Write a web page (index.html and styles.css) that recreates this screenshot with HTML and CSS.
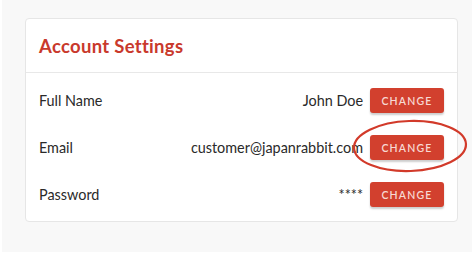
FILE: index.html
```html
<!DOCTYPE html>
<html lang="en">
<head>
    <meta charset="UTF-8">
    <title>Account Settings</title>
    <link rel="stylesheet" href="styles.css">
</head>
<body>
    <div class="page">
        <div class="card">
            <div class="card-header">
                <h2>Account Settings</h2>
            </div>
            <div class="card-body">
                <div class="row">
                    <span class="label">Full Name</span>
                    <span class="value">John Doe</span>
                    <button class="btn">CHANGE</button>
                </div>
                <div class="row">
                    <span class="label">Email</span>
                    <span class="value">customer@japanrabbit.com</span>
                    <button class="btn">CHANGE</button>
                </div>
                <div class="row">
                    <span class="label">Password</span>
                    <span class="value">****</span>
                    <button class="btn">CHANGE</button>
                </div>
            </div>
        </div>
        <!-- hand-drawn circle round the email button -->
        <svg class="circle" width="120" height="58" viewBox="0 0 120 58">
            <ellipse cx="59" cy="28" rx="56" ry="25" fill="none" stroke="#d23a2a" stroke-width="2.2" transform="rotate(-2 59 28)"/>
        </svg>
    </div>
</body>
</html>
```

FILE: styles.css
```css
body {
    margin: 0;
    font-family: 'Lato', 'Open Sans', sans-serif;
    background-color: #ffffff;
}
.page {
    position: relative;
    width: 470px;
    height: 252px;
    margin-left: 2px;
    background-color: #f8f8f8;
    padding: 18px 14px 0 23px;
    box-sizing: border-box;
}
.card {
    width: 433px;
    background-color: #ffffff;
    border: 1px solid #e6e6e6;
    border-radius: 4px;
    box-sizing: border-box;
}
.card-header {
    height: 54px;
    padding: 0 13px;
    display: flex;
    align-items: center;
    border-bottom: 1px solid #e8e8e8;
    box-sizing: border-box;
}
h2 {
    margin: 0;
    font-size: 18.5px;
    font-weight: 700;
    color: #c9392c;
    letter-spacing: 0.3px;
}
.card-body {
    padding: 15px 13px 14px 13px;
    display: flex;
    flex-direction: column;
    gap: 22px;
}
.row {
    display: flex;
    align-items: center;
    height: 25px;
    font-size: 14.4px;
    color: #2a2a2a;
}
.label {
    flex: 1;
}
.value {
    margin-right: 7px;
}
.btn {
    width: 74px;
    height: 25px;
    border: none;
    border-radius: 3px;
    background-color: #d2402e;
    color: #f7d9d3;
    font-family: 'Lato', sans-serif;
    font-size: 10.5px;
    font-weight: 600;
    letter-spacing: 1.2px;
    box-shadow: 0 2px 2px rgba(0, 0, 0, 0.2);
    padding: 0;
}
.circle {
    position: absolute;
    left: 349px;
    top: 118px;
}
```
